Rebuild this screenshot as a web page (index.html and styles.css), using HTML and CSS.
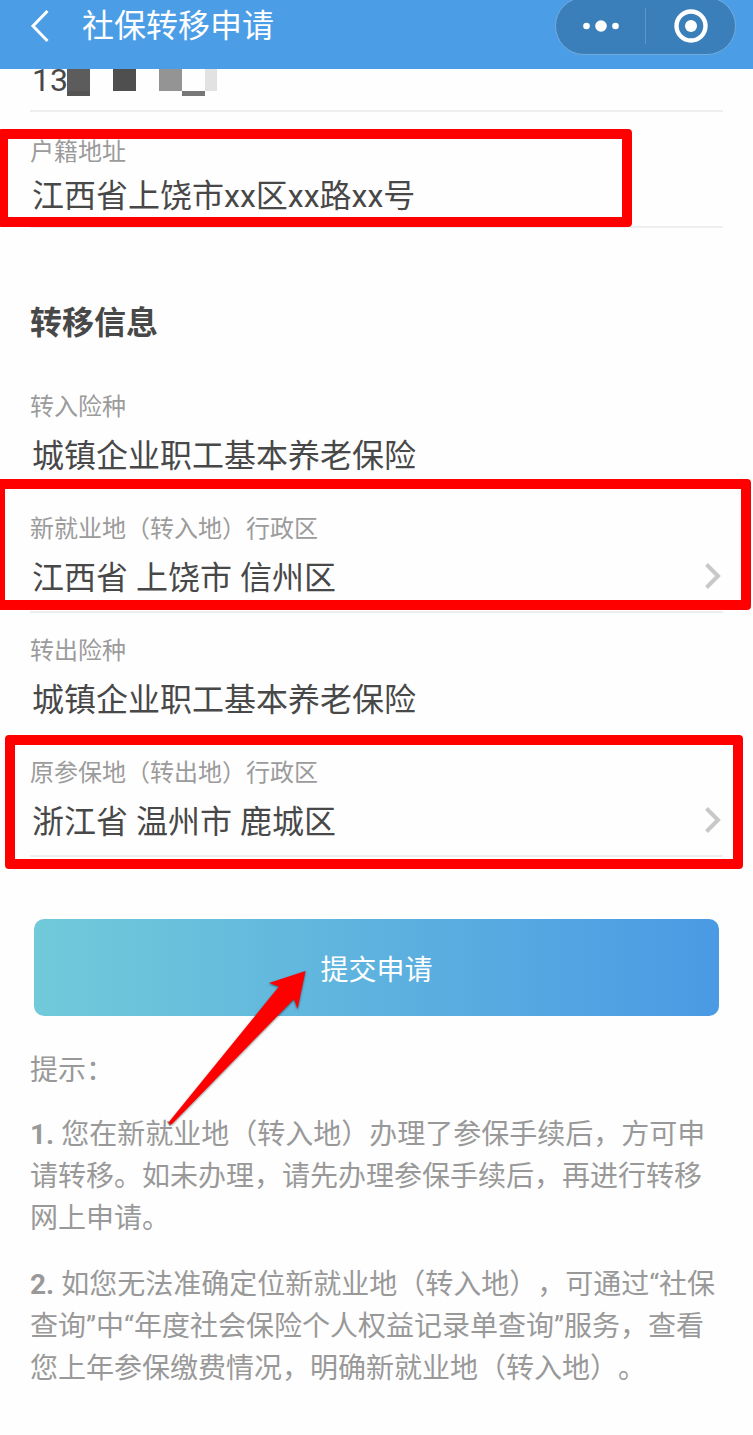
FILE: index.html
```html
<!DOCTYPE html>
<html lang="zh-CN">
<head>
  <meta charset="UTF-8">
  <meta name="viewport" content="width=device-width, initial-scale=1.0">
  <title>社保转移申请</title>
  <link rel="stylesheet" href="styles.css">
</head>
<body>

  <header class="navbar">
    <button type="button" class="nav-back" aria-label="返回">
      <svg width="20" height="34" viewBox="0 0 20 34" fill="none" stroke="#fff" stroke-width="3">
        <path d="M17.5 2 L3 17 L17.5 32"/>
      </svg>
    </button>
    <h1 class="nav-title">社保转移申请</h1>
    <div class="capsule">
      <button type="button" class="capsule-btn" aria-label="更多">
        <svg width="36" height="12" viewBox="0 0 36 12" fill="#fff">
          <circle cx="3.5" cy="6" r="3.3"/>
          <circle cx="18" cy="6" r="5.8"/>
          <circle cx="32.5" cy="6" r="3.3"/>
        </svg>
      </button>
      <button type="button" class="capsule-btn" aria-label="关闭">
        <svg width="34" height="34" viewBox="0 0 34 34">
          <circle cx="17" cy="17" r="14.5" fill="none" stroke="#fff" stroke-width="4.4"/>
          <circle cx="17" cy="17" r="6" fill="#fff"/>
        </svg>
      </button>
    </div>
  </header>

  <main class="page">
    <form>
      <div class="field field-phone">
        <input class="value" type="text" value="13" aria-label="手机号码" readonly>
        <svg class="mosaic" width="150" height="28" viewBox="0 0 150 28" shape-rendering="crispEdges">
          <rect x="0" y="0" width="23" height="23" fill="#5c5c5c"/>
          <rect x="0" y="23" width="23" height="5" fill="#545454"/>
          <rect x="46" y="0" width="23" height="23" fill="#4f4f4f"/>
          <rect x="92" y="0" width="23" height="23" fill="#949494"/>
          <rect x="115" y="23" width="23" height="5" fill="#777"/>
          <rect x="138" y="0" width="12" height="23" fill="#e2e2e2"/>
        </svg>
      </div>

      <div class="field field-compact">
        <label class="label" for="address">户籍地址</label>
        <input class="value" type="text" id="address" value="江西省上饶市xx区xx路xx号">
        <span class="mark mark-address"></span>
      </div>

      <h2 class="section-title">转移信息</h2>

      <div class="field no-line">
        <label class="label" for="inType">转入险种</label>
        <input class="value" type="text" id="inType" value="城镇企业职工基本养老保险" readonly>
      </div>

      <div class="field">
        <label class="label" for="inArea">新就业地（转入地）行政区</label>
        <button type="button" class="value picker" id="inArea">
          <span>江西省 上饶市 信州区</span>
          <svg width="16" height="26" viewBox="0 0 16 26" fill="none" stroke="#c8c8c8" stroke-width="4">
            <path d="M1.5 1.5 L13 13 L1.5 24.5"/>
          </svg>
        </button>
        <span class="mark mark-in"></span>
      </div>

      <div class="field no-line">
        <label class="label" for="outType">转出险种</label>
        <input class="value" type="text" id="outType" value="城镇企业职工基本养老保险" readonly>
      </div>

      <div class="field">
        <label class="label" for="outArea">原参保地（转出地）行政区</label>
        <button type="button" class="value picker" id="outArea">
          <span>浙江省 温州市 鹿城区</span>
          <svg width="16" height="26" viewBox="0 0 16 26" fill="none" stroke="#c8c8c8" stroke-width="4">
            <path d="M1.5 1.5 L13 13 L1.5 24.5"/>
          </svg>
        </button>
        <span class="mark mark-out"></span>
      </div>

      <div class="submit-row">
        <button type="submit" class="submit">提交申请</button>
        <svg class="arrow" width="148" height="164" viewBox="0 0 148 164">
          <path d="M140.500 4 L104 16 L114 19.500 L3.500 155.500 Q4.500 158 7 157 L129 32 L132.500 42 Z" fill="#f00"/>
        </svg>
      </div>
    </form>

    <section class="tips">
      <p class="tips-title">提示：</p>
      <p><b>1.</b> 您在新就业地（转入地）办理了参保手续后，方可申请转移。如未办理，请先办理参保手续后，再进行转移网上申请。</p>
      <p><b>2.</b> 如您无法准确定位新就业地（转入地），可通过“社保查询”中“年度社会保险个人权益记录单查询”服务，查看您上年参保缴费情况，明确新就业地（转入地）。</p>
    </section>
  </main>

</body>
</html>
```
FILE: styles.css
```css
* {
  box-sizing: border-box;
}
body {
  margin: 0;
  background-color: #fefefe;
  color: #484848;
  font-family: Roboto, "Noto Sans CJK SC", sans-serif;
  text-spacing-trim: space-all;
}
button, input {
  font-family: inherit;
  color: inherit;
  border: none;
  background: none;
  padding: 0;
}
button {
  cursor: pointer;
}
svg {
  display: block;
}

/* barre du haut */
.navbar {
  position: sticky;
  top: 0;
  z-index: 2;
  display: flex;
  align-items: center;
  height: 69px;
  padding: 0 17px 18px 30px;
  background-color: #4b9de6;
  color: #fff;
}
.nav-title {
  flex: 1;
  margin: 0 0 0 32px;
  font-size: 32px;
  font-weight: 400;
  line-height: 44px;
}
.capsule {
  display: flex;
  align-items: center;
  width: 181px;
  height: 58px;
  border: 1px solid #74abdb;
  border-radius: 29px;
  background-color: #3a7fb9;
}
.capsule-btn {
  flex: 1;
  display: flex;
  align-items: center;
  justify-content: center;
  height: 36px;
}
.capsule-btn + .capsule-btn {
  border-left: 1px solid #5e97c8;
}

.page {
  padding: 0 30px 44px;
}

/* champs */
.field {
  position: relative;
  display: flex;
  flex-direction: column;
  gap: 10px;
  padding: 21px 0 11px;
  border-bottom: 2px solid #eee;
}
.no-line {
  border-bottom-color: transparent;
}
.field-compact {
  gap: 5px;
  padding: 23px 0 8px;
}
/* le premier champ passe sous la barre */
.field-phone {
  margin-top: -11px;
  padding: 0 0 8px;
}
.label {
  font-size: 24px;
  line-height: 34px;
  color: #9b9b9b;
}
.value {
  width: 100%;
  height: 44px;
  padding: 0 2px;
  font-size: 32px;
  line-height: 44px;
}
.picker {
  display: flex;
  align-items: center;
  justify-content: space-between;
  text-align: left;
}
.picker svg {
  margin-bottom: 4px;
}
.mosaic {
  position: absolute;
  left: 37px;
  top: 10px;
}

/* cadres rouges */
.mark {
  position: absolute;
  border: 10px solid #f00;
  border-radius: 4px;
  pointer-events: none;
}
.mark-address {
  top: 17px;
  right: 91px;
  bottom: -1px;
  left: -32px;
}
.mark-in {
  top: -12px;
  right: -28px;
  bottom: 1px;
  left: -35px;
}
.mark-out {
  top: 0;
  right: -20px;
  bottom: -14px;
  left: -25px;
}

.section-title {
  margin: 73px 0 24px;
  font-size: 32px;
  font-weight: 700;
  line-height: 44px;
}

.submit-row {
  position: relative;
  margin-top: 62px;
  padding: 0 4px;
}
.submit {
  display: block;
  width: 100%;
  height: 97px;
  border-radius: 10px;
  background: linear-gradient(to right, #70cad9, #4a9ae4);
  color: #fff;
  font-size: 28px;
}
.arrow {
  position: absolute;
  left: 135px;
  top: 48px;
  filter: drop-shadow(0 1px 1px rgba(0, 0, 0, 0.5));
  pointer-events: none;
}

.tips {
  margin-top: 34px;
  font-size: 28px;
  line-height: 42px;
  color: #999;
}
.tips p {
  margin: 0 0 24px;
}
.tips .tips-title {
  margin-bottom: 22px;
}
```
